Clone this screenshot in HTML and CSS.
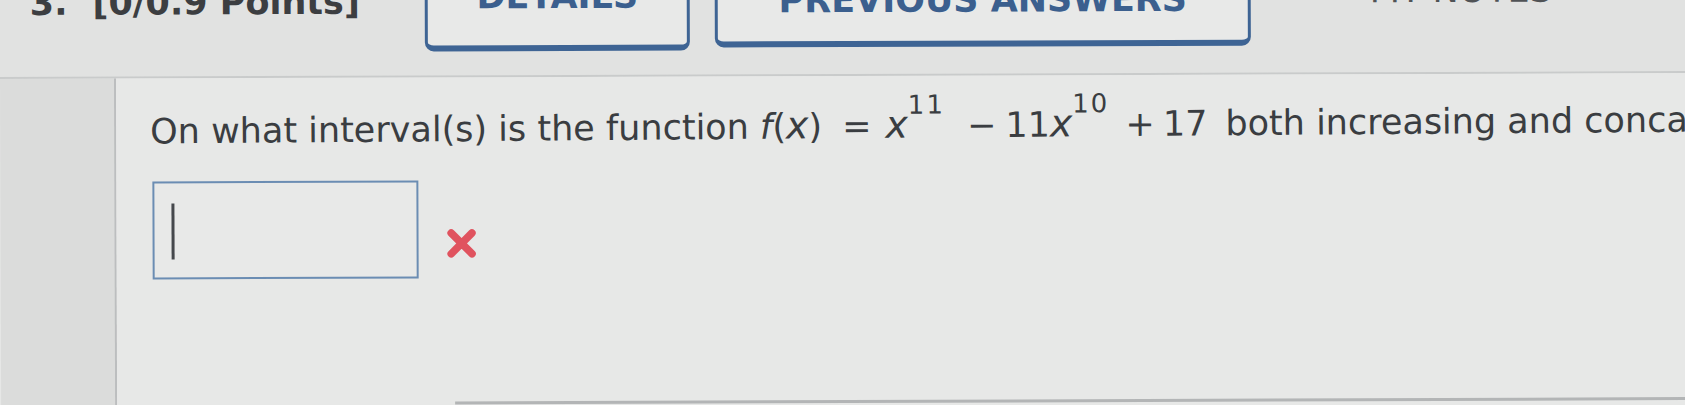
FILE: index.html
```html
<!DOCTYPE html>
<html lang="en">
<head>
<meta charset="utf-8">
<title>Question 3</title>
<link rel="stylesheet" href="styles.css">
</head>
<body>
<div class="page">
  <header class="header">
    <div class="points"><span class="qnum">3.</span><span class="qpts">[0/0.9 Points]</span></div>
    <div class="btn btn-details">DETAILS</div>
    <div class="btn btn-prev">PREVIOUS ANSWERS</div>
    <div class="notes">MY NOTES</div>
  </header>
  <div class="main">
    <aside class="sidebar"></aside>
    <section class="content">
      <p class="question">On what interval(s) is the function <span class="math"><i class="mi">f</i>(<i class="mi mx">x</i>)<span class="mo mo-eq">=</span><i class="mi mx">x</i><sup>11</sup><span class="mo mo-minus">−</span>11<i class="mi mx">x</i><sup>10</sup><span class="mo mo-plus">+</span>17</span><span class="rest">both increasing and concave up? (Enter your answer using interval notation.)</span></p>
      <div class="answer-row">
        <div class="answer-box"><span class="caret"></span></div>
        <svg class="wrong" viewBox="0 0 36 36" width="34" height="34" aria-label="incorrect">
          <path d="M7 7 L29 29 M29 7 L7 29" stroke="#e0535f" stroke-width="8" stroke-linecap="round" fill="none"/>
        </svg>
      </div>
      <div class="next-section"></div>
    </section>
  </div>
</div>
</body>
</html>
```
FILE: styles.css
```css
* { box-sizing: border-box; }
html, body { margin: 0; padding: 0; }
body {
  background: #e6e7e6;
  overflow: hidden;
  width: 1685px;
  height: 405px;
  font-family: "DejaVu Sans", Verdana, sans-serif;
  color: #3a3d41;
}
.page {
  width: 1720px;
  height: 460px;
  margin-left: -10px;
  margin-top: -10px;
  padding-left: 10px;
  padding-top: 10px;
  transform: rotate(-0.2deg);
  transform-origin: 10px 90px;
  background: #e6e7e6;
  display: flex;
  flex-direction: column;
}
.header {
  height: 79px;
  flex: none;
  background: #e1e2e1;
  border-bottom: 2px solid #c9cbcb;
  display: flex;
  align-items: flex-start;
  overflow: hidden;
}
.points {
  margin-left: 30px;
  margin-top: -17px;
  font-weight: bold;
  font-size: 35px;
  line-height: 40px;
  color: #3c3e41;
  white-space: nowrap;
  display: flex;
  gap: 25px;
  width: 395px;
}
.btn {
  margin-top: -14px;
  border: 3px solid #3e6494;
  border-bottom-width: 6px;
  border-radius: 0 0 9px 9px;
  background: #e8e9e8;
  color: #3b5f8e;
  font-weight: bold;
  font-size: 35px;
  display: flex;
  align-items: flex-start;
  justify-content: center;
  white-space: nowrap;
  overflow: hidden;
}
.btn-details {
  width: 265px;
  height: 67px;
  line-height: 18px;
}
.btn-prev {
  margin-left: 25px;
  width: 536px;
  height: 64px;
  line-height: 28px;
}
.notes {
  margin-left: 119px;
  margin-top: -25px;
  font-size: 35px;
  line-height: 40px;
  color: #505356;
  white-space: nowrap;
}
.main {
  flex: 1;
  display: flex;
}
.sidebar {
  width: 116px;
  flex: none;
  background: #dbdcdb;
  border-right: 2px solid #bcbebf;
}
.content {
  flex: 1;
  background: #e7e8e7;
  padding-left: 34px;
  padding-top: 31px;
  overflow: hidden;
}
.question {
  margin: 0;
  font-size: 35px;
  line-height: 42px;
  white-space: nowrap;
  color: #3a3d41;
  transform: rotate(-0.24deg);
  transform-origin: 0 50%;
}
.math { white-space: nowrap; }
.mi { font-style: italic; }
.mx { font-size: 38px; }
.mo { display: inline-block; }
.mo-eq { padding: 0 14px 0 20px; }
.mo-minus { padding: 0 9px 0 22px; }
.mo-plus { padding: 0 8px 0 16px; }
.rest { margin-left: 18px; }
.question sup {
  font-size: 26px;
  letter-spacing: 2px;
  line-height: 0;
  vertical-align: 24px;
}
.answer-row {
  margin-top: 29px;
  display: flex;
  align-items: flex-end;
  gap: 26px;
}
.answer-box {
  margin-left: 2px;
  width: 266px;
  height: 98px;
  border: 2px solid #6b8db3;
  background: #e8e9e8;
  padding: 20px 0 0 17px;
}
.caret {
  display: block;
  width: 3px;
  height: 56px;
  background: #45484c;
}
.wrong {
  display: block;
  margin-bottom: 18px;
}
.next-section {
  margin-top: 123px;
  margin-left: 304px;
  height: 40px;
  border-top: 3px solid #b3b5b6;
}
```
